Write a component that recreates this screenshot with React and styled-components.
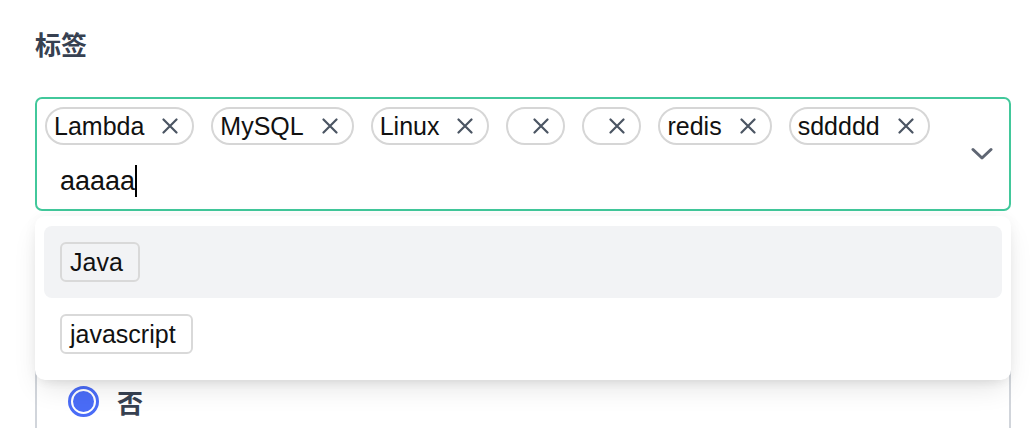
import React from 'react';
import styled, { createGlobalStyle } from 'styled-components';

const GlobalStyle = createGlobalStyle`
  html, body {
    margin: 0;
    padding: 0;
    background: #ffffff;
  }
  body {
    font-family: "Liberation Sans", "Noto Sans CJK SC", sans-serif;
    color: #111827;
  }
`;

const Page = styled.div`
  padding: 24px 25px 0 35px;
  height: 428px;
  box-sizing: border-box;
  overflow: hidden;
`;

const FieldLabel = styled.div`
  font-family: "Noto Sans CJK SC", sans-serif;
  font-size: 26px;
  line-height: 39px;
  font-weight: 600;
  color: #374151;
`;

const SelectWrap = styled.div`
  position: relative;
  margin-top: 34px;
  z-index: 5;
`;

const SelectBox = styled.div`
  display: flex;
  align-items: center;
  border: 2px solid #42c89b;
  border-radius: 7px;
  padding: 8px;
  background: #fff;
`;

const ValueArea = styled.div`
  flex: 1;
  display: flex;
  flex-direction: column;
  gap: 16px;
`;

const ChipList = styled.div`
  display: flex;
  flex-wrap: wrap;
  gap: 10px 17px;
`;

const Chip = styled.span`
  display: inline-flex;
  align-items: center;
  gap: 18px;
  height: 38px;
  box-sizing: border-box;
  padding: 0 14px 0 7px;
  border: 2px solid #d6d6d6;
  border-radius: 19px;
  font-size: 25px;
  color: #111;
  white-space: nowrap;
`;

const RemoveButton = styled.span`
  display: inline-flex;
  color: #4b5563;
`;

const InputRow = styled.div`
  display: flex;
  align-items: center;
  height: 40px;
  padding-left: 15px;
  font-size: 27px;
  color: #111;
`;

const Caret = styled.span`
  display: inline-block;
  width: 2px;
  height: 32px;
  background: #000;
`;

const Indicator = styled.span`
  display: inline-flex;
  align-items: center;
  padding: 0 8px 0 12px;
  color: #5f6673;
`;

const Menu = styled.div`
  position: absolute;
  top: calc(100% + 5px);
  left: 0;
  right: 0;
  background: #fff;
  border-radius: 10px;
  padding: 10px 9px;
  box-shadow: 0 12px 28px -6px rgba(0, 0, 0, 0.12), 0 6px 12px -6px rgba(0, 0, 0, 0.08), 0 0 14px rgba(0, 0, 0, 0.04);
`;

const Option = styled.div`
  display: flex;
  align-items: center;
  height: 72px;
  padding: 0 16px;
  border-radius: 8px;
  background: ${(p) => (p.$active ? '#f2f3f5' : 'transparent')};
`;

const OptionTag = styled.span`
  display: inline-flex;
  align-items: center;
  height: 40px;
  box-sizing: border-box;
  padding: 0 15px 0 8px;
  border: 2px solid #d9d9d9;
  border-radius: 6px;
  font-size: 25px;
  color: #111;
`;

const RadioBox = styled.div`
  margin-top: 152px;
  border: 2px solid #d1d5db;
  border-radius: 7px;
  padding: 12px 31px;
  display: flex;
  flex-direction: column;
  gap: 16px;
`;

const RadioOption = styled.label`
  display: flex;
  align-items: center;
  gap: 18px;
  height: 48px;
  font-family: "Noto Sans CJK SC", sans-serif;
  font-size: 26px;
  font-weight: 600;
  color: #374151;
`;

const RadioDot = styled.span`
  width: 31px;
  height: 31px;
  box-sizing: border-box;
  border-radius: 50%;
  border: 3px solid ${(p) => (p.$checked ? '#4a6cf7' : '#d1d5db')};
  display: inline-flex;
  align-items: center;
  justify-content: center;

  &::after {
    content: '';
    width: 21px;
    height: 21px;
    border-radius: 50%;
    background: ${(p) => (p.$checked ? '#4a6cf7' : 'transparent')};
  }
`;

const XIcon = () => (
  <svg width="16" height="16" viewBox="0 0 16 16" fill="none">
    <path d="M1.5 1.5L14.5 14.5M14.5 1.5L1.5 14.5" stroke="currentColor" strokeWidth="2.2" strokeLinecap="round" />
  </svg>
);

const ChevronDown = () => (
  <svg width="22" height="14" viewBox="0 0 22 14" fill="none">
    <path d="M2 2.5L11 11L20 2.5" stroke="currentColor" strokeWidth="3" strokeLinecap="round" strokeLinejoin="round" />
  </svg>
);

const tags = ['Lambda', 'MySQL', 'Linux', '', '', 'redis', 'sddddd'];
const options = ['Java', 'javascript'];

export default function App() {
  return (
    <>
      <GlobalStyle />
      <Page>
        <FieldLabel>标签</FieldLabel>
        <SelectWrap>
          <SelectBox>
            <ValueArea>
              <ChipList>
                {tags.map((t, i) => (
                  <Chip key={i}>
                    <span>{t}</span>
                    <RemoveButton>
                      <XIcon />
                    </RemoveButton>
                  </Chip>
                ))}
              </ChipList>
              <InputRow>
                <span>aaaaa</span>
                <Caret />
              </InputRow>
            </ValueArea>
            <Indicator>
              <ChevronDown />
            </Indicator>
          </SelectBox>
          <Menu>
            {options.map((o, i) => (
              <Option key={o} $active={i === 0}>
                <OptionTag>{o}</OptionTag>
              </Option>
            ))}
          </Menu>
        </SelectWrap>
        <RadioBox>
          <RadioOption>
            <RadioDot $checked />
            否
          </RadioOption>
        </RadioBox>
      </Page>
    </>
  );
}
